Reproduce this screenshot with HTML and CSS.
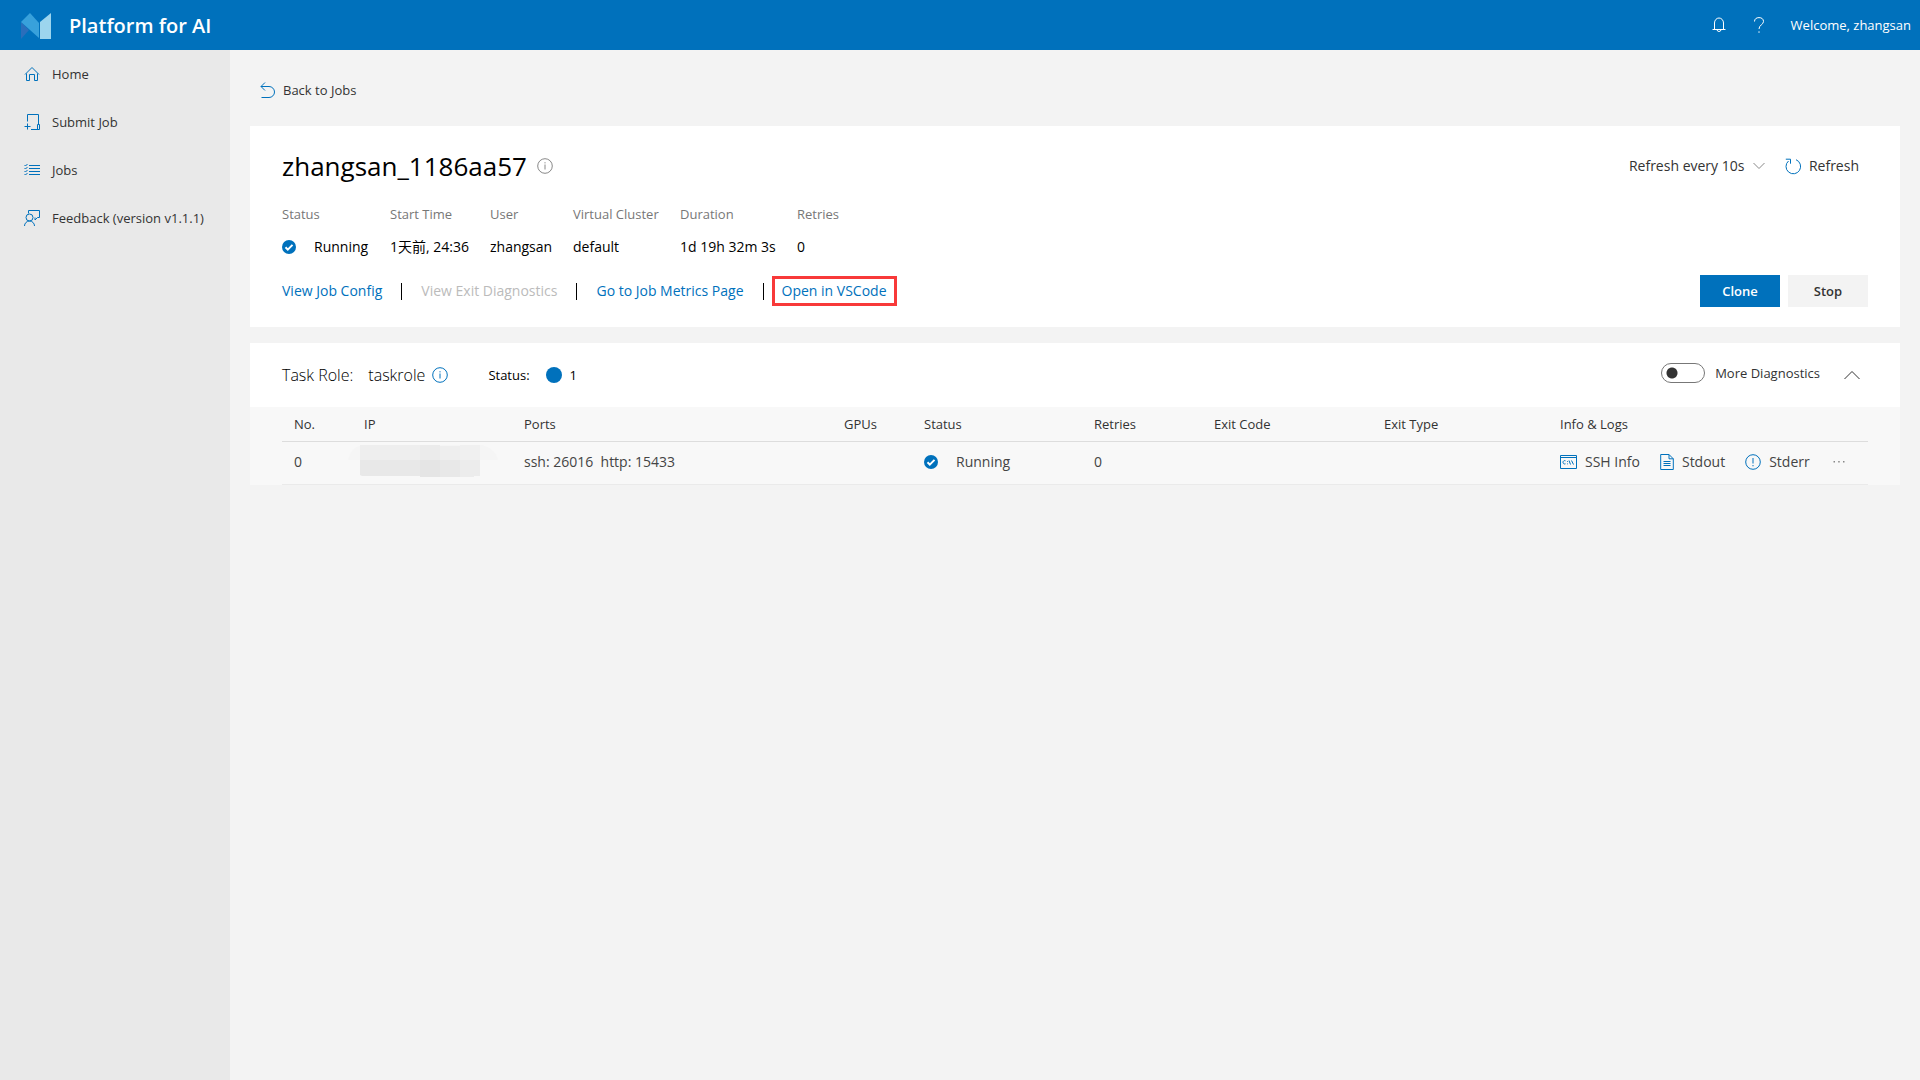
FILE: index.html
```html
<!DOCTYPE html>
<html lang="en">
<head>
<meta charset="utf-8">
<title>Platform for AI</title>
<link rel="stylesheet" href="styles.css">
</head>
<body>
<header class="topbar">
  <a class="brand" href="#">
    <svg class="logo" width="30" height="26" viewBox="0 0 30 26"><path fill="#2a6ebb" d="M0 9v17l8-9z"/><path fill="#38a1db" d="M0 9l9-9 9 10v15z"/><path fill="#9cd5ee" d="M19 9L30 0v26H19z"/></svg>
    <span class="brand-name">Platform for AI</span>
  </a>
  <div class="topbar-tools">
    <button class="tool" type="button" aria-label="Notifications"><svg class="line" width="14" height="16" viewBox="0 0 14 16"><path d="M.5 12.500h13M2.500 12.500V6a4.500 5 0 0 1 9 0v6.500M5 12.500a2 2 0 0 0 4 0"/></svg></button>
    <button class="tool" type="button" aria-label="Help"><svg class="line" width="12" height="16" viewBox="0 0 12 16"><path d="M1.500 4.500C1.500 2 3.300.6 6 .6s4.500 1.400 4.500 3.900C10.500 7.500 6 8 6 12M6 14.300v1.500"/></svg></button>
    <span class="welcome">Welcome, zhangsan</span>
  </div>
</header>
<div class="shell">
  <nav class="sidebar">
    <a class="nav-item" href="#"><svg class="line" width="16" height="16" viewBox="0 0 16 16"><path d="M1 8.500L8 1.500l7 7M2.500 7.500v7h3v-6h5v6h3v-7"/></svg>Home</a>
    <a class="nav-item" href="#"><svg class="line" width="16" height="16" viewBox="0 0 16 16"><path d="M3.500 7.500V.5h11v10M7 15.500h8.500v-5h-2v5M.5 12.500h6M3.500 9.500v6"/></svg>Submit Job</a>
    <a class="nav-item" href="#"><svg class="line" width="16" height="16" viewBox="0 0 16 16"><path d="M5 3.500h11M5 6.500h11M5 9.500h11M5 12.500h11M.5 3l1 1 2-2M.5 6l1 1 2-2M.5 9l1 1 2-2M.5 12l1 1 2-2"/></svg>Jobs</a>
    <a class="nav-item" href="#"><svg class="line" width="16" height="16" viewBox="0 0 16 16"><path d="M4.500 3.500v-3h11v7h-2l-2.500 2.500v-2.500M.5 16a5 5 0 0 1 10 0"/><circle cx="5.500" cy="7.500" r="3.500"/></svg>Feedback (version v1.1.1)</a>
  </nav>
  <main class="content">
    <a class="back" href="#"><svg class="line" width="15" height="16" viewBox="0 0 15 16"><path d="M5 .5l-4 4 4 4M1 4.500h8a5.200 5.200 0 0 1 0 11H1.500"/></svg>Back to Jobs</a>

    <section class="card summary">
      <div class="summary-head">
        <h1 class="job-name">zhangsan_1186aa57</h1>
        <svg class="info grey" width="16" height="16" viewBox="0 0 16 16"><circle cx="8" cy="8" r="7.300"/><path d="M8 6.500v5M8 4.200v1.200"/></svg>
        <div class="refresh-tools">
          <label class="interval"><select class="interval-select" aria-label="Refresh interval"><option>Refresh every 10s</option></select><svg class="chevron" width="12" height="8" viewBox="0 0 12 8"><path d="M.5 1L6 6.500 11.500 1"/></svg></label>
          <button class="refresh" type="button"><svg class="line" width="16" height="17" viewBox="0 0 16 17"><path d="M11 1.700A7.300 7.300 0 1 1 3.500 3M.8 1.200h4.700v4.500"/></svg>Refresh</button>
        </div>
      </div>
      <dl class="facts">
        <div class="fact fact-status"><dt>Status</dt><dd><svg class="check" width="14" height="14" viewBox="0 0 14 14"><circle cx="7" cy="7" r="7"/><path d="M3.500 7.300l2.300 2.300 4.700-4.700"/></svg>Running</dd></div>
        <div class="fact fact-start"><dt>Start Time</dt><dd>1天前, 24:36</dd></div>
        <div class="fact fact-user"><dt>User</dt><dd>zhangsan</dd></div>
        <div class="fact fact-cluster"><dt>Virtual Cluster</dt><dd>default</dd></div>
        <div class="fact fact-duration"><dt>Duration</dt><dd>1d 19h 32m 3s</dd></div>
        <div class="fact"><dt>Retries</dt><dd>0</dd></div>
      </dl>
      <div class="summary-foot">
        <div class="links">
          <a class="link" href="#">View Job Config</a>
          <span class="divider"></span>
          <button class="link" type="button" disabled>View Exit Diagnostics</button>
          <span class="divider"></span>
          <a class="link" href="#">Go to Job Metrics Page</a>
          <span class="divider"></span>
          <a class="link framed" href="#">Open in VSCode</a>
        </div>
        <div class="actions">
          <button class="button primary" type="button">Clone</button>
          <button class="button" type="button">Stop</button>
        </div>
      </div>
    </section>

    <section class="card">
      <div class="role-head">
        <span class="role-label">Task Role:</span>
        <span class="role-name">taskrole</span>
        <svg class="info" width="16" height="16" viewBox="0 0 16 16"><circle cx="8" cy="8" r="7.300"/><path d="M8 6.500v5M8 4.200v1.200"/></svg>
        <span class="role-status">Status:</span>
        <span class="dot"></span>
        <span class="role-count">1</span>
        <label class="toggle"><input class="switch" type="checkbox" role="switch"><span>More Diagnostics</span></label>
        <button class="collapse" type="button" aria-label="Collapse"><svg width="16" height="10" viewBox="0 0 16 10"><path d="M.5 9L8 1.500 15.500 9"/></svg></button>
      </div>
      <div class="table-wrap">
        <table class="tasks">
          <colgroup><col class="c-no"><col class="c-ip"><col class="c-ports"><col class="c-gpus"><col class="c-status"><col class="c-retries"><col class="c-code"><col class="c-type"><col></colgroup>
          <thead><tr><th>No.</th><th>IP</th><th>Ports</th><th>GPUs</th><th>Status</th><th>Retries</th><th>Exit Code</th><th>Exit Type</th><th>Info &amp; Logs</th></tr></thead>
          <tbody><tr>
            <td>0</td>
            <td class="ip"><svg class="mosaic" width="150" height="33" viewBox="0 0 150 33"><path fill="#f5f5f5" d="M0 16Q3 3 14 1h120q13 3 16 15z"/><path fill="#eee" d="M12 1h66v1h34l8-1v15H12z"/><path fill="#ebebeb" d="M72 1h20v15H72z"/><path fill="#f0f0f0" d="M112 1h20v15h-20z"/><path fill="#e8e8e8" d="M12 16h60v16H14l-2-1z"/><path fill="#e5e5e5" d="M72 16h20v17H72z"/><path fill="#e8e8e8" d="M92 16h20v17H92z"/><path fill="#ececec" d="M112 16h20v16h-6v1h-14z"/></svg></td>
            <td>ssh: 26016&nbsp; http: 15433</td>
            <td></td>
            <td><span class="state"><svg class="check" width="14" height="14" viewBox="0 0 14 14"><circle cx="7" cy="7" r="7"/><path d="M3.500 7.300l2.300 2.300 4.700-4.700"/></svg>Running</span></td>
            <td>0</td>
            <td></td>
            <td></td>
            <td><div class="logs">
              <button class="log" type="button"><svg width="17" height="14" viewBox="0 0 17 14"><path d="M.5.500h16v13H.5zM.5 2.500h16M5.500 5.800a1.700 1.700 0 1 0 0 3M7.500 6v.8M7.500 8.500v.8M9 5.500l1.500 4M11.500 5.500l2 4"/></svg>SSH Info</button>
              <button class="log" type="button"><svg width="14" height="16" viewBox="0 0 14 16"><path d="M.7.500h8.300l4.300 4.300v10.700H.7zM9 .5v4.300h4.300M3.500 7.500h7M3.500 9.500h7M3.500 11.500h7"/></svg>Stdout</button>
              <button class="log" type="button"><svg width="16" height="16" viewBox="0 0 16 16"><circle cx="8" cy="8" r="7.300"/><path d="M8 4v5.500M8 11v1.300"/></svg>Stderr</button>
              <button class="more" type="button" aria-label="More"><svg width="12" height="4" viewBox="0 0 12 4"><path d="M.5 1h1.500v1.500H.5zM5.200 1h1.500v1.500H5.200zM10 1h1.500v1.500H10z"/></svg></button>
            </div></td>
          </tr></tbody>
        </table>
      </div>
    </section>
  </main>
</div>
</body>
</html>
```
FILE: styles.css
```css
* { box-sizing: border-box; }
body {
  margin: 0;
  min-height: 100vh;
  display: flex;
  flex-direction: column;
  background: #f3f3f3;
  color: #333;
  font: 13px/20px "Open Sans", "Noto Sans CJK SC", sans-serif;
}
a { color: inherit; text-decoration: none; }
button, select {
  margin: 0;
  padding: 0;
  border: 0;
  background: none;
  color: inherit;
  font: inherit;
}
svg { flex: none; display: block; fill: none; stroke: #0071bc; }

.topbar {
  height: 50px;
  padding: 0 9px 0 21px;
  display: flex;
  align-items: center;
  justify-content: space-between;
  background: #0071bc;
  color: #fff;
}
.topbar svg { stroke: #fff; }
.brand { display: flex; align-items: center; gap: 18px; padding-top: 2px; }
.topbar .logo { stroke: none; }
.brand-name { font-size: 20px; line-height: 28px; font-weight: 600; }
.topbar-tools { display: flex; align-items: center; }
.tool { width: 40px; height: 48px; display: grid; place-items: center; }
.welcome { padding-left: 12px; }

.shell { flex: 1; display: flex; }
.sidebar { width: 230px; flex: none; background: #e9e9e9; }
.nav-item {
  height: 48px;
  padding-left: 24px;
  display: flex;
  align-items: center;
  gap: 12px;
}
.content { flex: 1; min-width: 0; padding: 20px; }
.back {
  height: 40px;
  margin-bottom: 16px;
  padding-left: 10px;
  display: flex;
  align-items: center;
  gap: 8px;
}
.card { margin-bottom: 16px; background: #fff; }

.summary { padding: 20px 32px; }
.summary-head { display: flex; align-items: center; height: 40px; }
.job-name { margin: 0 10px 0 0; color: #000; font-size: 26px; line-height: 40px; font-weight: 400; }
.grey { stroke: #888; }
.refresh-tools {
  margin-left: auto;
  padding-right: 9px;
  display: flex;
  align-items: center;
  gap: 20px;
  font-size: 14px;
}
.interval { display: flex; align-items: center; gap: 8px; }
.interval-select { appearance: none; }
.chevron { stroke: #888; }
.refresh { display: flex; align-items: center; gap: 8px; }

.facts { margin: 16px 0 0; display: flex; color: #000; }
.fact dt { color: #777; line-height: 24px; }
.fact dd { margin: 8px 0 0; font-size: 14px; line-height: 26px; display: flex; align-items: center; }
.fact dd .check { margin-right: 18px; }
.fact-status { width: 108px; }
.fact-start { width: 100px; }
.fact-user { width: 83px; }
.fact-cluster { width: 107px; }
.fact-duration { width: 117px; }
.check circle { fill: #0071bc; stroke: none; }
.check path { stroke: #fff; stroke-width: 2; }

.summary-foot { margin-top: 15px; display: flex; justify-content: space-between; align-items: center; }
.links { display: flex; align-items: center; font-size: 14px; color: #0071bc; }
.link:disabled { color: #bbb; }
.divider { width: 1px; height: 17px; margin: 0 19px; background: #000; }
.framed { margin-left: -11px; padding: 0 7px; border: 3px solid #f83939; line-height: 24px; }
.actions { display: flex; gap: 8px; }
.button { width: 80px; height: 32px; background: #f3f3f3; font-weight: 600; }
.primary { background: #0071bc; color: #fff; }

.role-head { height: 64px; padding: 0 40px 0 32px; display: flex; align-items: center; color: #000; }
.role-label, .role-name { font-size: 16px; font-weight: 300; }
.role-name { margin: 0 7px 0 15px; }
.role-status { margin-left: 40px; }
.dot { width: 16px; height: 16px; margin: 0 8px 0 16px; border-radius: 50%; background: #0071bc; }
.toggle { margin-left: auto; display: flex; gap: 10px; color: #333; padding-bottom: 4px; }
.switch {
  appearance: none;
  width: 44px;
  height: 20px;
  margin: 0;
  border: 1px solid #777;
  border-radius: 10px;
  background: radial-gradient(circle at 10px 9px, #333 5px, transparent 6px);
}
.collapse { margin-left: 24px; }
.collapse svg { stroke: #333; }

.table-wrap { padding: 0 32px; background: #f8f8f8; }
.tasks { width: 100%; table-layout: fixed; border-collapse: collapse; }
.tasks th { height: 34px; padding: 0 12px; border-bottom: 1px solid #ddd; text-align: left; font-weight: 400; }
.tasks td { height: 43px; padding: 0 12px 2px; border-bottom: 1px solid #eaeaea; font-size: 14px; color: #444; }
.c-no { width: 70px; }
.c-ip { width: 160px; }
.c-ports { width: 320px; }
.c-gpus { width: 80px; }
.c-status { width: 170px; }
.c-retries { width: 120px; }
.c-code { width: 170px; }
.c-type { width: 176px; }
.tasks .ip { padding: 0 0 4px; }
.mosaic { margin-left: -4px; stroke: none; }
.state { display: flex; align-items: center; gap: 18px; }
.logs { display: flex; align-items: center; }
.log { display: flex; align-items: center; gap: 8px; margin-right: 20px; }
.more { margin-left: 3px; }
.more svg { fill: #888; stroke: none; }
```
